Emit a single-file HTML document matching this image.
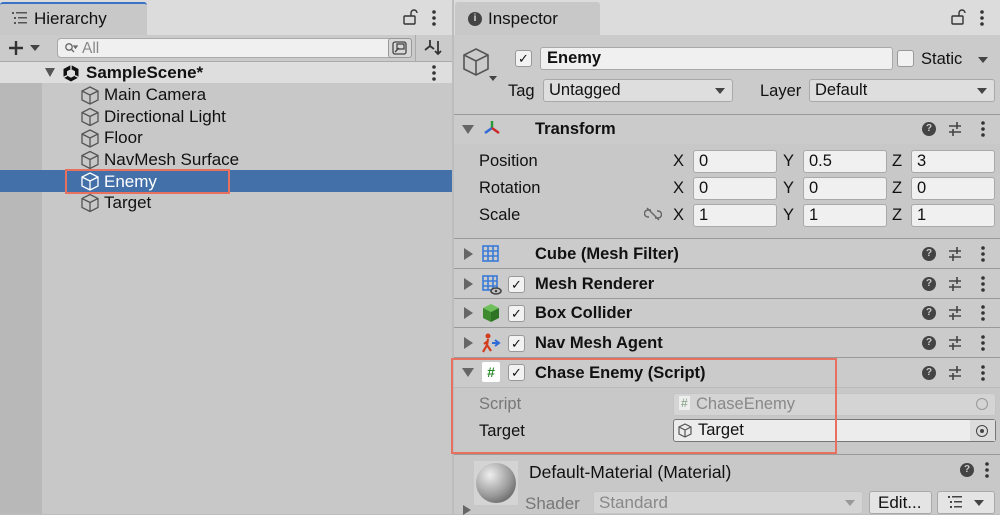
<!DOCTYPE html>
<html><head><style>
*{box-sizing:border-box;margin:0;padding:0}
body{width:1000px;height:514px;overflow:hidden;background:#bdbdbd;font-family:"Liberation Sans",sans-serif;font-size:16.5px;color:#111;position:relative}
.a{position:absolute}
.t{position:absolute;white-space:nowrap}
.h{font-size:17px}
.inp{position:absolute;background:#f0f0f0;border:1px solid #a9a9a9;border-radius:3px;height:23px;padding-left:5px;line-height:21px;font-size:16.5px}
.hdr{position:absolute;left:454px;width:546px;height:30px;background:#cbcbcb;border-top:1px solid #999}
.b{font-weight:bold}
.chk{position:absolute;width:17px;height:17px;background:#f2f2f2;border:1px solid #999;border-radius:3px;font-size:13px;text-align:center;line-height:15px}
.tri{position:absolute;width:0;height:0}
.q{position:absolute;width:14px;height:14px;border-radius:50%;background:#444;color:#ccc;font-size:10px;font-weight:bold;text-align:center;line-height:14px}
</style></head><body>
<svg width="0" height="0" style="position:absolute"><defs>
<g id="sl" fill="none" stroke="#444" stroke-width="1.6"><path d="M1 5H13M1 11H13M9 1V8M5 8V15"/></g>
<g id="dt" fill="#333"><circle cx="2" cy="2" r="1.8"/><circle cx="2" cy="8" r="1.8"/><circle cx="2" cy="14" r="1.8"/></g>
<g id="lk" fill="none" stroke="#333" stroke-width="1.4"><rect x="1" y="7" width="11" height="8" rx="1"/><path d="M8 7V4a3 3 0 0 1 6 0"/></g>
</defs></svg>
<!-- Hierarchy -->
<div class="a" style="left:0;top:0;width:452px;height:514px;background:#c8c8c8"></div>
<div class="a" style="left:0;top:0;width:452px;height:35px;background:#dcdcdc"></div>
<div class="a" style="left:0;top:2px;width:147px;height:33px;background:#c8c8c8;border-top:2px solid #3a72c6;border-radius:3px 3px 0 0"></div>
<svg class="a" style="left:12px;top:12px" width="16" height="12" fill="#555"><rect x="0" y="0" width="2" height="2"/><rect x="4" y="0" width="11" height="1.5"/><rect x="2" y="5" width="2" height="2"/><rect x="6" y="5" width="9" height="1.5"/><rect x="2" y="10" width="2" height="2"/><rect x="6" y="10" width="9" height="1.5"/></svg>
<div class="t h" style="left:34px;top:9px">Hierarchy</div>
<svg class="a" style="left:403px;top:9px" width="16" height="17"><use href="#lk"/></svg>
<svg class="a" style="left:432px;top:10px" width="4" height="16"><use href="#dt"/></svg>
<div class="a" style="left:0;top:35px;width:452px;height:27px;background:#cbcbcb;border-bottom:1px solid #aaa"></div>
<svg class="a" style="left:8px;top:40px" width="16" height="16"><path d="M8 1V15M1 8H15" stroke="#333" stroke-width="2.4"/></svg>
<div class="tri" style="left:30px;top:45px;border-left:5px solid transparent;border-right:5px solid transparent;border-top:6px solid #444"></div>
<div class="a" style="left:57px;top:38px;width:355px;height:20px;background:#f0f0f0;border:1px solid #aaa;border-radius:4px"></div>
<svg class="a" style="left:64px;top:42px" width="14" height="12" fill="none" stroke="#666" stroke-width="1.3"><circle cx="5" cy="5" r="3.2"/><path d="M7.5 7.5L10 10M10 4h3l-1.5 2z"/></svg>
<div class="t" style="left:82px;top:40px;font-size:15.5px;color:#888">All</div>
<div class="a" style="left:388px;top:38px;width:24px;height:20px;background:#d8d8d8;border:1px solid #999;border-radius:3px"></div>
<svg class="a" style="left:392px;top:41px" width="16" height="15" fill="none" stroke="#444" stroke-width="1.3"><rect x="1" y="1" width="13" height="12" rx="2"/><rect x="5" y="3" width="7" height="5"/><path d="M3 11L7 7"/></svg>
<div class="a" style="left:415px;top:35px;width:1px;height:27px;background:#aaa"></div>
<svg class="a" style="left:423px;top:38px" width="20" height="20" fill="none" stroke="#333" stroke-width="1.8"><path d="M7 2V8M7 8L2 12M7 8L11 11M15 3V16M12 13L15 16L18 13"/></svg>
<div class="a" style="left:0;top:62px;width:452px;height:21px;background:#dedede"></div>
<div class="a" style="left:0;top:83px;width:42px;height:431px;background:#b8b8b8"></div>
<div class="tri" style="left:45px;top:68px;border-left:5px solid transparent;border-right:5px solid transparent;border-top:9px solid #555"></div>
<svg class="a" style="left:62px;top:64px" width="18" height="18"><path d="M9 1L16.5 5V13.5L9 17.5L1.5 13.5V5Z" fill="#111"/><path d="M9 5L13 7.2V11.6L9 13.8L5 11.6V7.2Z" fill="#dedede"/><path d="M9 1V5M16.5 13.5L13 11.6M1.5 13.5L5 11.6" stroke="#dedede" stroke-width="1.4"/></svg>
<div class="t b h" style="left:86px;top:63px">SampleScene*</div>
<svg class="a" style="left:432px;top:65px" width="4" height="16"><use href="#dt"/></svg>
<div class="a" style="left:0;top:170px;width:452px;height:22px;background:#4470aa"></div>
<div class="a" style="left:65px;top:169px;width:165px;height:25px;border:2px solid #e8705f"></div>
<svg class="a" style="left:80px;top:85px" width="20" height="130" viewBox="0 0 20 130" fill="none" stroke="#555" stroke-width="1.3">
<path d="M10 2 L18 6 L18 15 L10 19 L2 15 L2 6 Z M2 6 L10 10 L18 6 M10 10 L10 19"/>
<g transform="translate(0,21.5)"><path d="M10 2 L18 6 L18 15 L10 19 L2 15 L2 6 Z M2 6 L10 10 L18 6 M10 10 L10 19"/></g>
<g transform="translate(0,43)"><path d="M10 2 L18 6 L18 15 L10 19 L2 15 L2 6 Z M2 6 L10 10 L18 6 M10 10 L10 19"/></g>
<g transform="translate(0,64.5)"><path d="M10 2 L18 6 L18 15 L10 19 L2 15 L2 6 Z M2 6 L10 10 L18 6 M10 10 L10 19"/></g>
<g transform="translate(0,86)" stroke="#fff"><path d="M10 2 L18 6 L18 15 L10 19 L2 15 L2 6 Z M2 6 L10 10 L18 6 M10 10 L10 19"/></g>
<g transform="translate(0,107.5)"><path d="M10 2 L18 6 L18 15 L10 19 L2 15 L2 6 Z M2 6 L10 10 L18 6 M10 10 L10 19"/></g>
</svg>
<div class="t h" style="left:104px;top:85px">Main Camera</div>
<div class="t h" style="left:104px;top:107px">Directional Light</div>
<div class="t h" style="left:104px;top:128px">Floor</div>
<div class="t h" style="left:104px;top:150px">NavMesh Surface</div>
<div class="t h" style="left:104px;top:172px;color:#fff">Enemy</div>
<div class="t h" style="left:104px;top:193px">Target</div>

<!-- Inspector -->
<div class="a" style="left:454px;top:0;width:546px;height:514px;background:#c8c8c8"></div>
<div class="a" style="left:454px;top:0;width:546px;height:35px;background:#dcdcdc"></div>
<div class="a" style="left:455px;top:2px;width:145px;height:33px;background:#c8c8c8;border-radius:3px 3px 0 0"></div>
<div class="a" style="left:468px;top:12px;width:14px;height:14px;border-radius:50%;background:#444;color:#ddd;font-size:10px;text-align:center;line-height:14px;font-weight:bold">i</div>
<div class="t h" style="left:488px;top:9px">Inspector</div>
<svg class="a" style="left:951px;top:9px" width="16" height="17"><use href="#lk"/></svg>
<svg class="a" style="left:980px;top:10px" width="4" height="16"><use href="#dt"/></svg>
<div class="a" style="left:454px;top:35px;width:546px;height:80px;background:#cbcbcb"></div>
<svg class="a" style="left:462px;top:47px" width="40" height="38" fill="none" stroke="#555" stroke-width="1.6"><path d="M14 2 L26 8 L26 22 L14 28 L2 22 L2 8 Z M2 8 L14 14 L26 8 M14 14 L14 28"/><path d="M27 29 L35 29 L31 34 Z" fill="#444" stroke="none"/></svg>
<div class="chk" style="left:515px;top:50px">✓</div>
<div class="inp b" style="left:540px;top:47px;width:353px;padding-left:6px">Enemy</div>
<div class="chk" style="left:897px;top:50px"></div>
<div class="t" style="left:921px;top:50px">Static</div>
<div class="tri" style="left:978px;top:57px;border-left:5px solid transparent;border-right:5px solid transparent;border-top:6px solid #444"></div>
<div class="t" style="left:508px;top:82px">Tag</div>
<div class="inp" style="left:543px;top:79px;width:190px;background:#dedede">Untagged</div>
<div class="tri" style="left:715px;top:88px;border-left:5px solid transparent;border-right:5px solid transparent;border-top:6px solid #444"></div>
<div class="t" style="left:760px;top:82px">Layer</div>
<div class="inp" style="left:809px;top:79px;width:186px;background:#dedede">Default</div>
<div class="tri" style="left:977px;top:88px;border-left:5px solid transparent;border-right:5px solid transparent;border-top:6px solid #444"></div>

<div class="hdr" style="top:114px"></div>
<div class="tri" style="left:462px;top:125px;border-left:6px solid transparent;border-right:6px solid transparent;border-top:9px solid #666"></div>
<svg class="a" style="left:482px;top:119px" width="22" height="18"><path d="M10 2 V9" stroke="#2a9a3a" stroke-width="2.5"/><path d="M10 9 L3 14" stroke="#2f6bd6" stroke-width="2.5"/><path d="M10 9 L17 14" stroke="#cc2a2a" stroke-width="2.5"/></svg>
<div class="t b" style="left:535px;top:120px">Transform</div>
<div class="q" style="left:922px;top:122px">?</div>
<svg class="a" style="left:948px;top:121px" width="14" height="16"><use href="#sl"/></svg>
<svg class="a" style="left:981px;top:121px" width="4" height="16"><use href="#dt"/></svg>

<div class="t" style="left:479px;top:152px">Position</div>
<div class="t" style="left:479px;top:179px">Rotation</div>
<div class="t" style="left:479px;top:206px">Scale</div>
<svg class="a" style="left:644px;top:207px" width="18" height="14" fill="none" stroke="#666" stroke-width="1.4"><path d="M7 3H4a3.5 3.5 0 0 0 0 7h1M11 11h3a3.5 3.5 0 0 0 0-7h-1M3 1L15 13"/></svg>
<div class="t" style="left:673px;top:152px">X</div><div class="inp" style="left:693px;top:150px;width:84px">0</div>
<div class="t" style="left:783px;top:152px">Y</div><div class="inp" style="left:803px;top:150px;width:84px">0.5</div>
<div class="t" style="left:892px;top:152px">Z</div><div class="inp" style="left:911px;top:150px;width:84px">3</div>
<div class="t" style="left:673px;top:179px">X</div><div class="inp" style="left:693px;top:177px;width:84px">0</div>
<div class="t" style="left:783px;top:179px">Y</div><div class="inp" style="left:803px;top:177px;width:84px">0</div>
<div class="t" style="left:892px;top:179px">Z</div><div class="inp" style="left:911px;top:177px;width:84px">0</div>
<div class="t" style="left:673px;top:206px">X</div><div class="inp" style="left:693px;top:204px;width:84px">1</div>
<div class="t" style="left:783px;top:206px">Y</div><div class="inp" style="left:803px;top:204px;width:84px">1</div>
<div class="t" style="left:892px;top:206px">Z</div><div class="inp" style="left:911px;top:204px;width:84px">1</div>

<!-- component headers -->
<div class="hdr" style="top:238px"></div>
<div class="hdr" style="top:268px"></div>
<div class="hdr" style="top:298px"></div>
<div class="hdr" style="top:327px"></div>
<div class="hdr" style="top:357px"></div>
<div class="a" style="left:454px;top:387px;width:546px;height:1px;background:#bbb"></div>
<div class="tri" style="left:464px;top:248px;border-top:6px solid transparent;border-bottom:6px solid transparent;border-left:9px solid #666"></div>
<div class="tri" style="left:464px;top:278px;border-top:6px solid transparent;border-bottom:6px solid transparent;border-left:9px solid #666"></div>
<div class="tri" style="left:464px;top:307px;border-top:6px solid transparent;border-bottom:6px solid transparent;border-left:9px solid #666"></div>
<div class="tri" style="left:464px;top:337px;border-top:6px solid transparent;border-bottom:6px solid transparent;border-left:9px solid #666"></div>
<div class="tri" style="left:462px;top:368px;border-left:6px solid transparent;border-right:6px solid transparent;border-top:9px solid #666"></div>
<svg class="a" style="left:481px;top:244px" width="20" height="20" fill="none" stroke="#3a7ad8" stroke-width="1.6"><rect x="2" y="2" width="15" height="15"/><path d="M7 2V17M12 2V17M2 7H17M2 12H17"/></svg>
<svg class="a" style="left:481px;top:274px" width="22" height="22" fill="none" stroke="#3a7ad8" stroke-width="1.6"><rect x="2" y="2" width="14" height="14"/><path d="M7 2V16M12 2V16M2 7H16M2 12H16"/><ellipse cx="15" cy="17" rx="5" ry="3" fill="#c8c8c8" stroke="#444"/><circle cx="15" cy="17" r="1.3" fill="#444" stroke="none"/></svg>
<svg class="a" style="left:481px;top:303px" width="20" height="20"><path d="M10 1 L18 5 L10 9 L2 5Z" fill="#6ec05a"/><path d="M2 5 L10 9 L10 19 L2 15Z" fill="#3d8a2f"/><path d="M18 5 L10 9 L10 19 L18 15Z" fill="#2f7325"/></svg>
<svg class="a" style="left:481px;top:333px" width="22" height="22"><circle cx="7" cy="3" r="2.5" fill="#d23c1c"/><path d="M7 6 L6 12 L2 19 M6 12 L10 18 M7 8 L3 11" stroke="#d23c1c" stroke-width="2.2" fill="none"/><path d="M11 10 H17 M14 7 L18 10 L14 13" stroke="#2f6bd6" stroke-width="2" fill="none"/></svg>
<div class="a" style="left:482px;top:362px;width:18px;height:20px;background:#fff;border-radius:2px;color:#2a8a2a;font-size:14px;font-weight:bold;text-align:center;line-height:20px">#</div>
<div class="chk" style="left:508px;top:276px">✓</div>
<div class="chk" style="left:508px;top:305px">✓</div>
<div class="chk" style="left:508px;top:335px">✓</div>
<div class="chk" style="left:508px;top:364px">✓</div>
<div class="t b" style="left:535px;top:245px">Cube (Mesh Filter)</div>
<div class="t b" style="left:535px;top:275px">Mesh Renderer</div>
<div class="t b" style="left:535px;top:304px">Box Collider</div>
<div class="t b" style="left:535px;top:334px">Nav Mesh Agent</div>
<div class="t b" style="left:535px;top:364px">Chase Enemy (Script)</div>
<div class="q" style="left:922px;top:247px">?</div>
<div class="q" style="left:922px;top:277px">?</div>
<div class="q" style="left:922px;top:306px">?</div>
<div class="q" style="left:922px;top:336px">?</div>
<div class="q" style="left:922px;top:366px">?</div>
<svg class="a" style="left:948px;top:246px" width="14" height="16"><use href="#sl"/></svg>
<svg class="a" style="left:948px;top:276px" width="14" height="16"><use href="#sl"/></svg>
<svg class="a" style="left:948px;top:305px" width="14" height="16"><use href="#sl"/></svg>
<svg class="a" style="left:948px;top:335px" width="14" height="16"><use href="#sl"/></svg>
<svg class="a" style="left:948px;top:365px" width="14" height="16"><use href="#sl"/></svg>
<svg class="a" style="left:981px;top:246px" width="4" height="16"><use href="#dt"/></svg>
<svg class="a" style="left:981px;top:276px" width="4" height="16"><use href="#dt"/></svg>
<svg class="a" style="left:981px;top:305px" width="4" height="16"><use href="#dt"/></svg>
<svg class="a" style="left:981px;top:335px" width="4" height="16"><use href="#dt"/></svg>
<svg class="a" style="left:981px;top:365px" width="4" height="16"><use href="#dt"/></svg>

<div class="t" style="left:479px;top:395px;color:#777">Script</div>
<div class="inp" style="left:673px;top:393px;width:323px;background:#d4d4d4;border-color:#c4c4c4;color:#888;padding-left:22px">ChaseEnemy</div>
<div class="t" style="left:679px;top:396px;font-size:12px;color:#7a9a7a;background:#eee;padding:0 2px">#</div>
<div class="a" style="left:976px;top:398px;width:12px;height:12px;border:1.5px solid #999;border-radius:50%"></div>
<div class="t" style="left:479px;top:422px">Target</div>
<div class="inp" style="left:673px;top:419px;width:323px;background:#ececec;border-color:#777;padding-left:24px">Target</div>
<svg class="a" style="left:677px;top:423px" width="16" height="16" fill="none" stroke="#555" stroke-width="1.2"><path d="M8 1 L14 4 L14 11 L8 14 L2 11 L2 4 Z M2 4 L8 7 L14 4 M8 7 L8 14"/></svg>
<div class="a" style="left:970px;top:420px;width:25px;height:21px;background:#dcdcdc"></div>
<div class="a" style="left:976px;top:425px;width:12px;height:12px;border:1.5px solid #444;border-radius:50%"></div>
<div class="a" style="left:980px;top:429px;width:4px;height:4px;background:#444;border-radius:50%"></div>

<div class="a" style="left:451px;top:358px;width:386px;height:96px;border:2px solid #e8705f"></div>
<div class="a" style="left:454px;top:454px;width:546px;height:1px;background:#999"></div>
<div class="a" style="left:474px;top:461px;width:44px;height:44px;background:#d4d4d4"></div>
<div class="a" style="left:476px;top:463px;width:40px;height:40px;border-radius:50%;background:radial-gradient(circle at 35% 30%,#eee,#999 55%,#444)"></div>
<div class="t" style="left:529px;top:462px;font-size:17.5px">Default-Material (Material)</div>
<div class="q" style="left:960px;top:463px">?</div>
<svg class="a" style="left:985px;top:462px" width="4" height="16"><use href="#dt"/></svg>
<div class="t" style="left:525px;top:494px;color:#777;font-size:17px">Shader</div>
<div class="inp" style="left:593px;top:491px;width:270px;background:#d4d4d4;border-color:#c4c4c4;color:#888;font-size:17px">Standard</div>
<div class="tri" style="left:845px;top:500px;border-left:5px solid transparent;border-right:5px solid transparent;border-top:6px solid #999"></div>
<div class="inp" style="left:869px;top:491px;width:63px;background:#e4e4e4;padding-left:8px;font-size:17px">Edit...</div>
<div class="inp" style="left:937px;top:491px;width:58px;background:#e4e4e4"></div>
<svg class="a" style="left:948px;top:496px" width="14" height="12" fill="#444"><rect x="0" y="0" width="2" height="2"/><rect x="4" y="0" width="10" height="1.5"/><rect x="2" y="5" width="2" height="2"/><rect x="6" y="5" width="8" height="1.5"/><rect x="2" y="10" width="2" height="2"/><rect x="6" y="10" width="8" height="1.5"/></svg>
<div class="tri" style="left:974px;top:500px;border-left:5px solid transparent;border-right:5px solid transparent;border-top:6px solid #444"></div>
<div class="tri" style="left:463px;top:505px;border-top:5px solid transparent;border-bottom:5px solid transparent;border-left:8px solid #666"></div>
</body></html>
